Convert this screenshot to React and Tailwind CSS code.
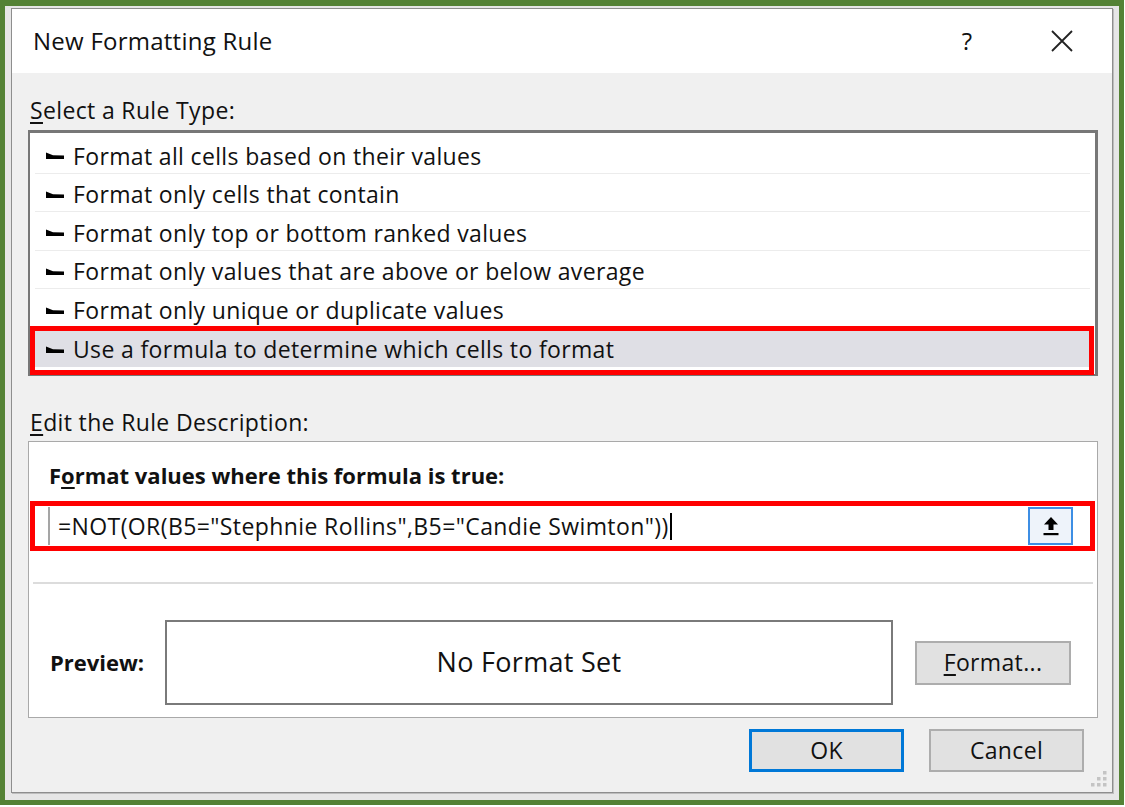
import React from "react";

const rules = [
  "Format all cells based on their values",
  "Format only cells that contain",
  "Format only top or bottom ranked values",
  "Format only values that are above or below average",
  "Format only unique or duplicate values",
  "Use a formula to determine which cells to format",
];

// little bullet arrow used in the rule type list
function Bullet() {
  return (
    <svg width="18" height="9" viewBox="0 0 18 9" className="shrink-0 mt-[2px]">
      <path d="M0 0.5 L7 3.3 L18 3.6 L18 7 L0 7 Z" fill="#000" />
    </svg>
  );
}

function Grip() {
  const dots = [
    [12, 0],
    [12, 6],
    [6, 6],
    [12, 12],
    [6, 12],
    [0, 12],
  ];
  return (
    <svg width="17" height="17" viewBox="0 0 17 17" className="absolute right-[5px] bottom-[5px]">
      {dots.map(([x, y], i) => (
        <rect key={i} x={x + 1} y={y + 1} width="3.5" height="3.5" fill="#c4c4c4" />
      ))}
    </svg>
  );
}

export default function App() {
  const font = { fontFamily: '"Open Sans", "Noto Sans", Arial, sans-serif' };

  return (
    <div className="w-[1125px] h-[807px] bg-white text-[#111]" style={font}>
      <div className="w-[1124px] h-[805px] border-[5px] border-t-[6px] border-[#548235] bg-[#e6e6e6] px-[6px] pt-[2px] pb-[7px]">
        {/* Dialog */}
        <div className="relative h-full border border-[#8e8e8e] bg-[#f0f0f0] flex flex-col shadow-[1px_1px_0_#bdbdbd]">
          {/* Title bar */}
          <div className="h-[64px] bg-white flex items-center pl-[21px] pr-[38px]">
            <span className="text-[24px] tracking-[0.25px] flex-1">New Formatting Rule</span>
            <span className="text-[24px] mr-[78px]">?</span>
            <svg width="24" height="24" viewBox="0 0 24 24">
              <path d="M2 2 L22 22 M22 2 L2 22" stroke="#222" strokeWidth="1.8" />
            </svg>
          </div>

          {/* Body */}
          <div className="flex-1 pl-[16px] pr-[14px] text-[23px] tracking-[0.35px]">
            <div className="mt-[23px] h-[28px] leading-[28px] pl-[2px]">
              <span className="underline underline-offset-[3px]">S</span>elect a Rule Type:
            </div>

            <div className="relative mt-[6px] h-[246px] border-2 border-[#777] border-r-[3px] border-t-[3px] bg-white pt-[2px] px-[5px]">
              {rules.map((r, i) => {
                const sel = i === rules.length - 1;
                return (
                  <div
                    key={r}
                    className={`h-[38.6px] flex items-center gap-[9px] pl-[11px] pt-[4px] ${
                      sel ? "bg-[#dfdfe5]" : "border-b border-[#ececec]"
                    }`}
                  >
                    <Bullet />
                    <span className="whitespace-nowrap">{r}</span>
                  </div>
                );
              })}
              {/* red annotation box */}
              <div className="absolute left-0 top-[193px] w-[1064px] h-[49px] border-[5px] border-[#ff0000]" />
            </div>

            <div className="mt-[32px] h-[28px] leading-[28px] pl-[2px]">
              <span className="underline underline-offset-[3px]">E</span>dit the Rule Description:
            </div>

            <div className="relative mt-[5px] h-[277px] border border-[#a9a9a9] bg-white">
              <div className="mt-[19px] pl-[20px] h-[28px] leading-[28px] text-[22px] tracking-normal font-bold">
                F<span className="underline underline-offset-[3px]">o</span>rmat values where this formula is true:
              </div>

              {/* formula input */}
              <div className="mt-[18px] ml-[19px] mr-[24px] h-[38px] flex items-center border-l-[2px] border-[#a5a5a5] bg-white">
                <span className="pl-[8px] whitespace-nowrap tracking-[0.4px]">
                  =NOT(OR(B5="Stephnie Rollins",B5="Candie Swimton"))
                </span>
                <span className="w-[2px] h-[27px] bg-black ml-[1px]" />
                <div className="flex-1" />
                <div className="w-[45px] h-[38px] border-2 border-[#3d8ee4] bg-[#eef3fa] flex items-center justify-center">
                  <svg width="20" height="22" viewBox="0 0 20 22">
                    <path d="M10 2 L3 9.5 L7.5 9.5 L7.5 15 L12.5 15 L12.5 9.5 L17 9.5 Z" fill="#000" />
                    <rect x="2.5" y="18" width="15" height="2.2" fill="#000" />
                  </svg>
                </div>
              </div>
              <div className="absolute left-[1px] top-[59px] w-[1065px] h-[50px] border-[5px] border-[#ff0000]" />

              <div className="mt-[37px] mx-[4px] h-[2px] bg-[#dcdcdc]" />

              {/* preview row */}
              <div className="mt-[36px] flex items-center">
                <span className="w-[136px] pl-[21px] text-[22px] tracking-normal font-bold">Preview:</span>
                <div className="w-[728px] h-[85px] border-2 border-[#7a7a7a] bg-white flex items-center justify-center text-[27px] tracking-[0.3px]">
                  No Format Set
                </div>
                <button className="ml-[22px] w-[156px] h-[44px] border-2 border-[#adadad] bg-[#e1e1e1]">
                  <span className="underline underline-offset-[3px]">F</span>ormat...
                </button>
              </div>
            </div>

            {/* buttons */}
            <div className="mt-[11px] flex justify-end gap-[25px] pr-[14px]">
              <button className="w-[155px] h-[43px] border-[3px] border-[#0078d7] bg-[#e1e1e1]">
                OK
              </button>
              <button className="w-[155px] h-[43px] border-2 border-[#adadad] bg-[#e1e1e1]">
                Cancel
              </button>
            </div>
          </div>
          <Grip />
        </div>
      </div>
    </div>
  );
}
